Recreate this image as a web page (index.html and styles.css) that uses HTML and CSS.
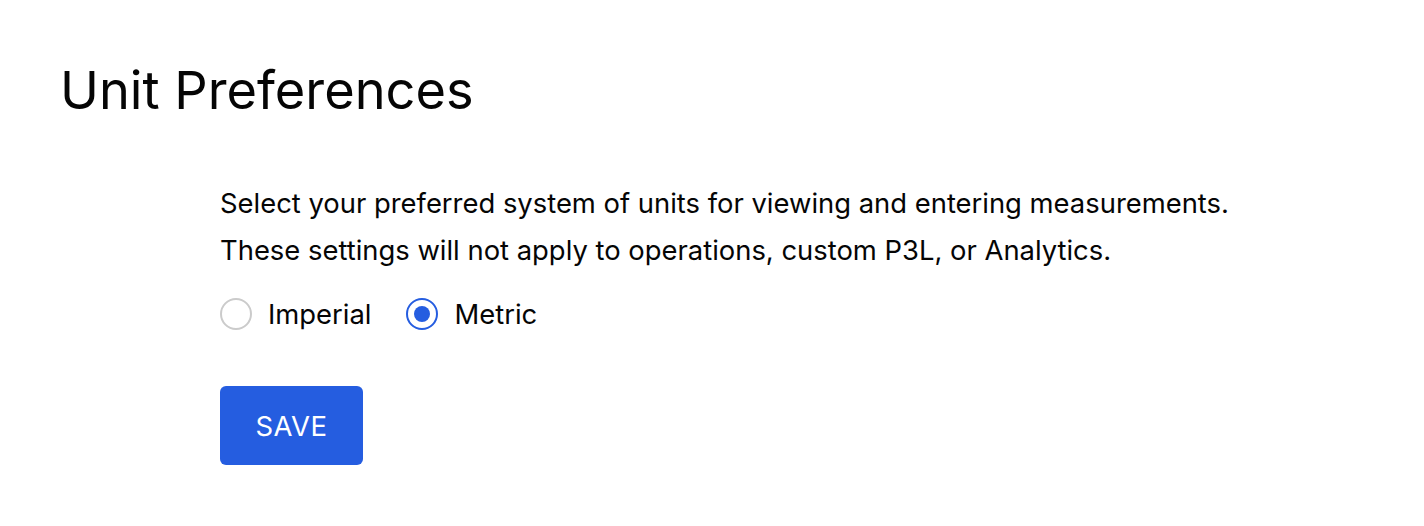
FILE: index.html
```html
<!DOCTYPE html>
<html lang="en">
<head>
<meta charset="utf-8">
<link rel="stylesheet" href="styles.css">
</head>
<body>
<main class="page">
  <h1 class="title">Unit Preferences</h1>
  <section class="content">
    <p class="desc">Select your preferred system of units for viewing and entering measurements.</p>
    <p class="desc">These settings will not apply to operations, custom P3L, or Analytics.</p>
    <div class="radios">
      <label class="radio"><span class="dot"></span><span class="label">Imperial</span></label>
      <label class="radio checked"><span class="dot"></span><span class="label">Metric</span></label>
    </div>
    <button class="save">SAVE</button>
  </section>
</main>
</body>
</html>
```
FILE: styles.css
```css
html, body {
  margin: 0;
  background: #fff;
}
body {
  font-family: "Inter", "Liberation Sans", sans-serif;
  color: #050505;
}
.page {
  padding: 57px 0 0 60px;
}
.title {
  margin: 0;
  font-size: 52.3px;
  font-weight: 400;
  line-height: 66px;
}
.content {
  padding: 57px 0 0 160px;
}
.desc {
  margin: 0;
  font-size: 27.4px;
  line-height: 47px;
}
.radios {
  display: flex;
  gap: 35px;
  margin-top: 20px;
  height: 40px;
  align-items: center;
}
.radio {
  display: flex;
  align-items: center;
  gap: 16px;
  font-size: 27.4px;
}
.dot {
  width: 32px;
  height: 32px;
  border: 2px solid #cbcbcb;
  border-radius: 50%;
  box-sizing: border-box;
  position: relative;
}
.checked .dot {
  border-color: #255de0;
}
.checked .dot::after {
  content: "";
  position: absolute;
  inset: 6px;
  border-radius: 50%;
  background: #255de0;
}
.save {
  display: block;
  margin-top: 52px;
  width: 143px;
  height: 79px;
  border: none;
  border-radius: 6px;
  background: #255de0;
  color: #fff;
  font-family: inherit;
  font-size: 27.5px;
  letter-spacing: 0.5px;
  padding: 0;
}
```
